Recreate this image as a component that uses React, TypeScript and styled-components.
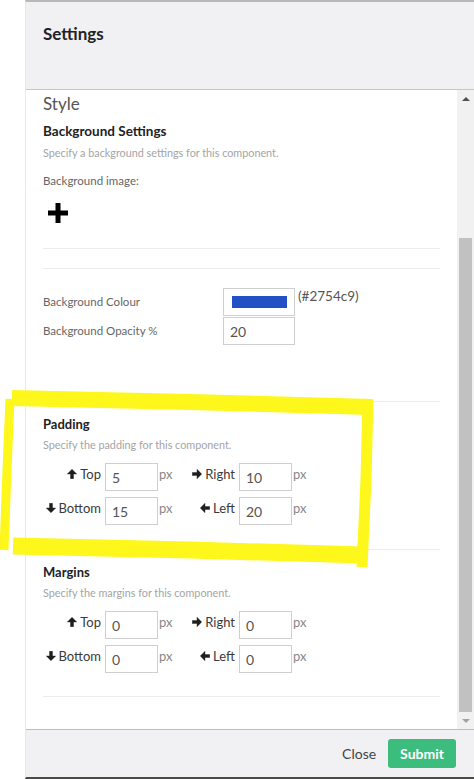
import React from 'react';
import styled, { createGlobalStyle } from 'styled-components';

const GlobalStyle = createGlobalStyle`
  html, body { margin: 0; padding: 0; background: #fff; }
  body { font-family: Lato, "Open Sans", "Liberation Sans", sans-serif; }
  * { box-sizing: border-box; }
`;

const Page = styled.div`
  position: relative;
  width: 474px;
  height: 779px;
  padding-left: 25px;
  overflow: hidden;
  background: #fff;
`;

const Modal = styled.div`
  display: flex;
  flex-direction: column;
  height: 100%;
  border-top: 2px solid #b8b8b8;
  border-bottom: 2px solid #4a4a4a;
  border-left: 1px solid #e8e8e8;
`;

const Header = styled.div`
  height: 88px;
  flex: none;
  background: #f1f1f3;
  border-bottom: 1px solid #c6c6c6;
  padding: 22px 17px 0;
`;

const HeaderTitle = styled.h2`
  margin: 0;
  font-size: 17px;
  line-height: 20px;
  font-weight: 700;
  color: #222;
`;

const Body = styled.div`
  flex: 1;
  display: flex;
  min-height: 0;
  background: #fff;
`;

const Content = styled.div`
  flex: 1;
  padding: 4px 17px 0 17px;
`;

const StyleHeading = styled.div`
  font-size: 17px;
  line-height: 20px;
  color: #555;
`;

const SectionTitle = styled.div<{ $mt: number; $size?: number }>`
  margin-top: ${(p) => p.$mt}px;
  font-size: ${(p) => p.$size ?? 13}px;
  line-height: 16px;
  font-weight: 700;
  color: #222;
`;

const Description = styled.div<{ $mt: number }>`
  margin-top: ${(p) => p.$mt}px;
  font-size: 10.8px;
  line-height: 14px;
  color: #a4a4a4;
`;

const FieldLabel = styled.div<{ $mt?: number }>`
  margin-top: ${(p) => p.$mt ?? 0}px;
  font-size: 11.5px;
  line-height: 14px;
  color: #666;
`;

const AddButton = styled.button`
  display: block;
  margin: 15px 0 0 5px;
  padding: 0;
  width: 20px;
  height: 20px;
  border: none;
  background: none;
  color: #000;
  cursor: pointer;
`;

const Divider = styled.div<{ $mt: number }>`
  margin-top: ${(p) => p.$mt}px;
  height: 1px;
  background: #ececec;
`;

const ColourGrid = styled.div`
  margin-top: 19px;
  display: grid;
  grid-template-columns: 180px 72px auto;
  row-gap: 1px;
  align-items: center;
`;

const ColourBox = styled.div`
  width: 72px;
  height: 28px;
  border: 1px solid #cfcfcf;
  padding: 7px 7px 7px 8px;
  background: #fff;
`;

const Swatch = styled.div<{ $color: string }>`
  width: 100%;
  height: 100%;
  background: ${(p) => p.$color};
`;

const HexText = styled.div`
  align-self: start;
  margin-left: 3px;
  font-size: 13.5px;
  line-height: 16px;
  color: #555;
`;

const TextInput = styled.input<{ $w: number }>`
  width: ${(p) => p.$w}px;
  height: 28px;
  border: 1px solid #cfcfcf;
  border-radius: 0;
  padding: 0 6px;
  font-family: Lato, "Open Sans", sans-serif;
  font-size: 14px;
  color: #555;
  background: #fff;
  outline: none;
`;

const SpacingGrid = styled.div`
  margin-top: 11px;
  display: grid;
  grid-template-columns: 62px 53px 23px 58px 53px auto;
  row-gap: 6px;
  align-items: start;
`;

const SideLabel = styled.div`
  display: flex;
  justify-content: flex-end;
  align-items: center;
  gap: 3px;
  padding: 3px 4px 0 0;
  font-size: 13px;
  line-height: 16px;
  color: #3a3a3a;
`;

const ArrowSvg = styled.svg`
  flex: none;
  color: #1e1e1e;
`;

const Unit = styled.div`
  padding: 3px 0 0 1px;
  font-size: 13px;
  line-height: 16px;
  color: #888;
`;

const Scrollbar = styled.div`
  width: 17px;
  flex: none;
  display: flex;
  flex-direction: column;
  background: #f1f1f1;
`;

const ScrollButton = styled.div<{ $dir: 'up' | 'down' }>`
  height: 17px;
  flex: none;
  display: flex;
  align-items: center;
  justify-content: center;
  &::before {
    content: '';
    width: 0;
    height: 0;
    border-left: 4px solid transparent;
    border-right: 4px solid transparent;
    ${(p) =>
      p.$dir === 'up'
        ? 'border-bottom: 4px solid #505050;'
        : 'border-top: 4px solid #a3a3a3;'}
  }
`;

const Track = styled.div`
  flex: 1;
  display: flex;
  flex-direction: column;
  justify-content: flex-end;
`;

const Thumb = styled.div`
  height: 474px;
  margin: 0 2px;
  background: #c1c1c1;
`;

const Footer = styled.div`
  height: 48px;
  flex: none;
  background: #f1f1f3;
  border-top: 1px solid #bdbdbd;
  display: flex;
  align-items: center;
  justify-content: flex-end;
  gap: 12px;
  padding-right: 18px;
`;

const CloseButton = styled.button`
  border: none;
  background: none;
  padding: 0;
  font-family: Lato, "Open Sans", sans-serif;
  font-size: 14px;
  color: #444;
  cursor: pointer;
`;

const SubmitButton = styled.button`
  height: 29px;
  padding: 0 12px;
  border: none;
  border-radius: 3px;
  background: #3dbd7d;
  color: #fff;
  font-family: Lato, "Open Sans", sans-serif;
  font-size: 14px;
  font-weight: 700;
  cursor: pointer;
`;

const Annotation = styled.svg`
  position: absolute;
  left: 0;
  top: 0;
  pointer-events: none;
`;

type Dir = 'up' | 'right' | 'down' | 'left';
const rotation: Record<Dir, number> = { up: 0, right: 90, down: 180, left: 270 };

function Arrow({ dir }: { dir: Dir }) {
  return (
    <ArrowSvg width="10" height="10" viewBox="0 0 10 10" aria-hidden="true">
      <path
        d="M5 0.3 L9.7 5 L6.5 5 L6.5 9.7 L3.5 9.7 L3.5 5 L0.3 5 Z"
        fill="currentColor"
        stroke="currentColor"
        strokeWidth="0.4"
        strokeLinejoin="round"
        transform={`rotate(${rotation[dir]} 5 5)`}
      />
    </ArrowSvg>
  );
}

type Side = { dir: Dir; label: string; value: string };

const spacingSections: { title: string; desc: string; sides: Side[] }[] = [
  {
    title: 'Padding',
    desc: 'Specify the padding for this component.',
    sides: [
      { dir: 'up', label: 'Top', value: '5' },
      { dir: 'right', label: 'Right', value: '10' },
      { dir: 'down', label: 'Bottom', value: '15' },
      { dir: 'left', label: 'Left', value: '20' },
    ],
  },
  {
    title: 'Margins',
    desc: 'Specify the margins for this component.',
    sides: [
      { dir: 'up', label: 'Top', value: '0' },
      { dir: 'right', label: 'Right', value: '0' },
      { dir: 'down', label: 'Bottom', value: '0' },
      { dir: 'left', label: 'Left', value: '0' },
    ],
  },
];

function SpacingSection({ title, desc, sides }: { title: string; desc: string; sides: Side[] }) {
  return (
    <>
      <SectionTitle $mt={14}>{title}</SectionTitle>
      <Description $mt={6}>{desc}</Description>
      <SpacingGrid>
        {sides.map((s) => (
          <React.Fragment key={s.label}>
            <SideLabel>
              <Arrow dir={s.dir} />
              <span>{s.label}</span>
            </SideLabel>
            <TextInput $w={53} value={s.value} readOnly />
            <Unit>px</Unit>
          </React.Fragment>
        ))}
      </SpacingGrid>
    </>
  );
}

export default function App() {
  return (
    <>
      <GlobalStyle />
      <Page>
        <Modal>
          <Header>
            <HeaderTitle>Settings</HeaderTitle>
          </Header>
          <Body>
            <Content>
              <StyleHeading>Style</StyleHeading>
              <SectionTitle $mt={9} $size={13.5}>Background Settings</SectionTitle>
              <Description $mt={7}>Specify a background settings for this component.</Description>
              <FieldLabel $mt={14}>Background image:</FieldLabel>
              <AddButton aria-label="Add background image">
                <svg width="20" height="20" viewBox="0 0 20 20">
                  <rect x="7.5" y="0" width="5" height="20" fill="currentColor" />
                  <rect x="0" y="7.5" width="20" height="5" fill="currentColor" />
                </svg>
              </AddButton>
              <Divider $mt={25} />
              <Divider $mt={19} />
              <ColourGrid>
                <FieldLabel>Background Colour</FieldLabel>
                <ColourBox>
                  <Swatch $color="#2350c5" />
                </ColourBox>
                <HexText>(#2754c9)</HexText>
                <FieldLabel>Background Opacity %</FieldLabel>
                <TextInput $w={72} value="20" readOnly />
                <span />
              </ColourGrid>
              <Divider $mt={56} />
              <SpacingSection {...spacingSections[0]} />
              <Divider $mt={24} />
              <SpacingSection {...spacingSections[1]} />
              <Divider $mt={23} />
            </Content>
            <Scrollbar>
              <ScrollButton $dir="up" />
              <Track>
                <Thumb />
              </Track>
              <ScrollButton $dir="down" />
            </Scrollbar>
          </Body>
          <Footer>
            <CloseButton>Close</CloseButton>
            <SubmitButton>Submit</SubmitButton>
          </Footer>
        </Modal>
        <Annotation width="474" height="779" viewBox="0 0 474 779">
          <g fill="none" stroke="#fdf71c" strokeLinecap="butt" strokeLinejoin="round">
            <path d="M12 398 L190 402 L372 407" strokeWidth="16" />
            <path d="M368 399 L366 480 L362 567" strokeWidth="11" />
            <path d="M13 546 L190 550 L363 555" strokeWidth="17" />
            <path d="M10 399 L7 470 L4 550" strokeWidth="9" />
          </g>
        </Annotation>
      </Page>
    </>
  );
}
